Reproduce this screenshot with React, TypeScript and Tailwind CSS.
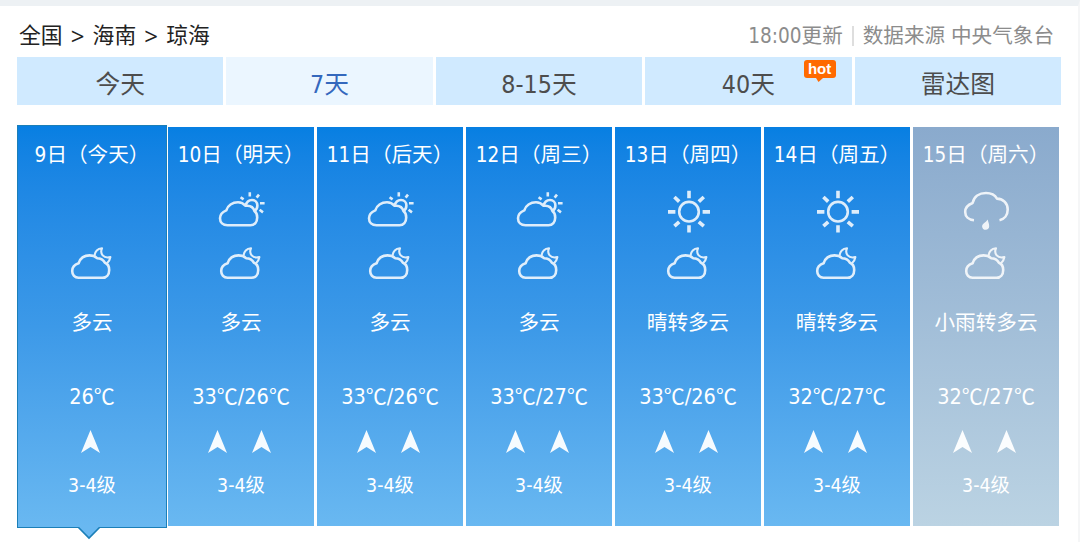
import { clsx } from "clsx";

type IconName = "cloudSun" | "cloudMoon" | "sun" | "rain";

type Day = {
  date: string;
  label: string;
  day?: IconName;
  night: IconName;
  desc: string;
  high?: number;
  low: number;
  wind: string;
};

const tabs = ["今天", "7天", "8-15天", "40天", "雷达图"];

const days: Day[] = [
  { date: "9", label: "今天", night: "cloudMoon", desc: "多云", low: 26, wind: "3-4" },
  { date: "10", label: "明天", day: "cloudSun", night: "cloudMoon", desc: "多云", high: 33, low: 26, wind: "3-4" },
  { date: "11", label: "后天", day: "cloudSun", night: "cloudMoon", desc: "多云", high: 33, low: 26, wind: "3-4" },
  { date: "12", label: "周三", day: "cloudSun", night: "cloudMoon", desc: "多云", high: 33, low: 27, wind: "3-4" },
  { date: "13", label: "周四", day: "sun", night: "cloudMoon", desc: "晴转多云", high: 33, low: 26, wind: "3-4" },
  { date: "14", label: "周五", day: "sun", night: "cloudMoon", desc: "晴转多云", high: 32, low: 27, wind: "3-4" },
  { date: "15", label: "周六", day: "rain", night: "cloudMoon", desc: "小雨转多云", high: 32, low: 27, wind: "3-4" },
];

function WeatherIcon({ name }: { name?: IconName }) {
  return (
    <svg
      viewBox="0 0 48 48"
      className="size-12 shrink-0 overflow-visible opacity-85"
      fill="none"
      stroke="white"
      strokeWidth="2.6"
      strokeLinejoin="round"
    >
      {name === "cloudSun" && (
        <>
          <path d="M10.5 37.3C6 37.3 3 34.5 3 30.3C3 26.5 5.5 24 9.3 22.4C10.5 17.5 15.5 14.2 21 14.2C24.5 14.2 26.8 15.8 28.6 17.8C33.5 17.2 36.5 19.5 37.5 23.2C39.5 24.5 40.2 27 40.2 29.5C40.2 34 37.5 37.3 33.5 37.3Z" />
          <path d="M28.6 17.8C29.5 13.8 32 12 35 12C38.2 12 40.4 14.4 40.4 17.4C40.4 19.8 39.2 21.8 37.3 22.8" />
          <path d="M23.6 9.2L26.6 11.4M32.8 4.2V8.4M42 6.6L39.6 9.6M43 15.3H47.6M42.6 21.8L46 24.4" />
        </>
      )}
      {name === "cloudMoon" && (
        <>
          <path d="M10.5 35.8C6.8 35.8 4.2 33 4.2 29C4.2 25.3 6.8 22.6 10.6 21.3C12.2 16.3 16.5 13.4 21.5 13.4C24.6 13.4 27 14.2 29 16.2C32.5 16.2 35.5 18 37 20.8C40 22 41.2 25 41.2 28C41.2 32.5 38.5 35.8 34.5 35.8Z" />
          <path d="M26.4 13.8C27 9.4 30 6.5 34 6.2C31.6 11.5 35.5 17 42.4 15C42 17.4 41 19.6 39 21.2" strokeWidth="2.1" />
        </>
      )}
      {name === "sun" && (
        <>
          <circle cx="25" cy="23.7" r="9.8" />
          <path
            d="M25 2.8V10.2M25 37.2V44.6M4 23.9H11.4M38.6 23.9H46M10.4 9L15.2 13.6M39.8 9L34.8 13.6M10.4 38.2L15.2 33.8M39.8 38.2L34.8 33.8"
            strokeWidth="3.6"
          />
        </>
      )}
      {name === "rain" && (
        <>
          <path d="M12 32.2C6.5 31.8 3.2 28.5 3.2 24C3.2 19.5 6.5 16.5 10.6 15C12 8.5 17.3 5 24 5C29.5 5 33 7 35 10.6C41.5 10.8 45.7 15.5 45.7 21.5C45.7 27 42.5 31.2 37.5 32.2" />
          <path d="M25.6 31.6C26.4 34.4 27.2 36 27.2 38.2C27.2 40.3 25.7 41.8 23.7 41.8C21.7 41.8 20.1 40.4 20.1 38.4C20.1 35.8 24 34.6 25.6 31.6Z" fill="white" stroke="none" />
        </>
      )}
    </svg>
  );
}

function WindArrow() {
  return (
    <svg viewBox="0 0 19 23" className="h-[23px] w-[19px]" fill="white">
      <path d="M9.5 0L19 23L9.5 17L0 23Z" fillOpacity="0.95" />
    </svg>
  );
}

function Temp({ value }: { value: number }) {
  return (
    <>
      {value}
      <span className="font-['Noto_Sans_CJK_SC',sans-serif] text-[21px]">℃</span>
    </>
  );
}

function DayColumn({ item, active, muted }: { item: Day; active: boolean; muted: boolean }) {
  return (
    <div
      className={clsx(
        "relative flex shrink-0 flex-col items-center whitespace-nowrap text-[20.6px] leading-6 text-white",
        active
          ? "mr-px h-[403px] w-[150px] border border-[#1b7fb8] pt-px"
          : "mt-0.5 mr-[3px] h-[399px] w-[146px]",
        muted
          ? "bg-linear-to-b from-[#8aaacd] to-[#bbd3e3]"
          : "bg-linear-to-b from-[#077fe2] via-[#3c99e8] to-[#69b8f1]"
      )}
    >
      <div className="mt-4">
        {item.date}日（{item.label}）
      </div>
      <div className="mt-[21px] flex flex-col gap-1.5">
        <WeatherIcon name={item.day} />
        <WeatherIcon name={item.night} />
      </div>
      <div className="mt-[21px]">{item.desc}</div>
      <div className="mt-12 text-[21.5px]">
        {item.high !== undefined && (
          <>
            <Temp value={item.high} />/
          </>
        )}
        <Temp value={item.low} />
      </div>
      <div className="mt-[21px] mr-[3px] flex gap-[25.5px]">
        {item.high !== undefined && <WindArrow />}
        <WindArrow />
      </div>
      <div className="mt-[21px] text-[19.4px]">{item.wind}级</div>
      {active && (
        <svg viewBox="0 0 24 13" className="absolute top-full left-[59px] h-[13px] w-6">
          <path d="M1 0L12 11L23 0" fill="#69b8f1" stroke="#1b7fb8" strokeWidth="1.6" />
        </svg>
      )}
    </div>
  );
}

export default function App() {
  return (
    <div className="h-[542px] w-[1080px] overflow-hidden border-t-[6px] border-r-2 border-t-[#edf1f4] border-r-[#f5f6f7] bg-white font-['DejaVu_Sans_Condensed','Noto_Sans_CJK_SC',sans-serif]">
      <div className="flex h-[51px] items-center justify-between pt-[9px] pr-6 pl-[19px]">
        <div className="flex gap-2 text-[21.8px] leading-8 text-[#222]">
          <span>全国</span>
          <span className="flex w-3.5 justify-center font-['Open_Sans',sans-serif] text-2xl/8">&gt;</span>
          <span>海南</span>
          <span className="flex w-3.5 justify-center font-['Open_Sans',sans-serif] text-2xl/8">&gt;</span>
          <span>琼海</span>
        </div>
        <div className="flex items-center text-[20.6px] leading-8 text-[#8c8c8c]">
          <span>18:00更新</span>
          <span className="mx-[9px] h-5 w-0.5 bg-[#dedede]" />
          <span>数据来源 中央气象台</span>
        </div>
      </div>
      <div className="ml-[17px] flex w-[1044px] gap-[3px]">
        {tabs.map((tab, i) => (
          <div
            key={tab}
            className={clsx(
              "relative flex h-[47.5px] flex-1 items-center justify-center pt-2 text-[24.8px]",
              i === 1 ? "bg-[#ebf6ff] text-[#3468bd]" : "bg-[#d0eaff] text-[#4d4d4d]"
            )}
          >
            {tab}
            {tab === "40天" && (
              <span className="absolute top-[3px] right-4 flex h-[18px] w-8 items-center justify-center rounded-[3px] bg-[#ff6a00] font-['Liberation_Sans',sans-serif] text-[15px] font-bold text-white">
                hot
                <svg viewBox="0 0 7 4" className="absolute top-full left-3 h-1 w-[7px]">
                  <path d="M0 0H7L2.5 4Z" fill="#ff6a00" />
                </svg>
              </span>
            )}
          </div>
        ))}
      </div>
      <div className="mt-[20.5px] ml-[17px] flex items-start">
        {days.map((item, i) => (
          <DayColumn key={item.date} item={item} active={i === 0} muted={i === days.length - 1} />
        ))}
      </div>
    </div>
  );
}
